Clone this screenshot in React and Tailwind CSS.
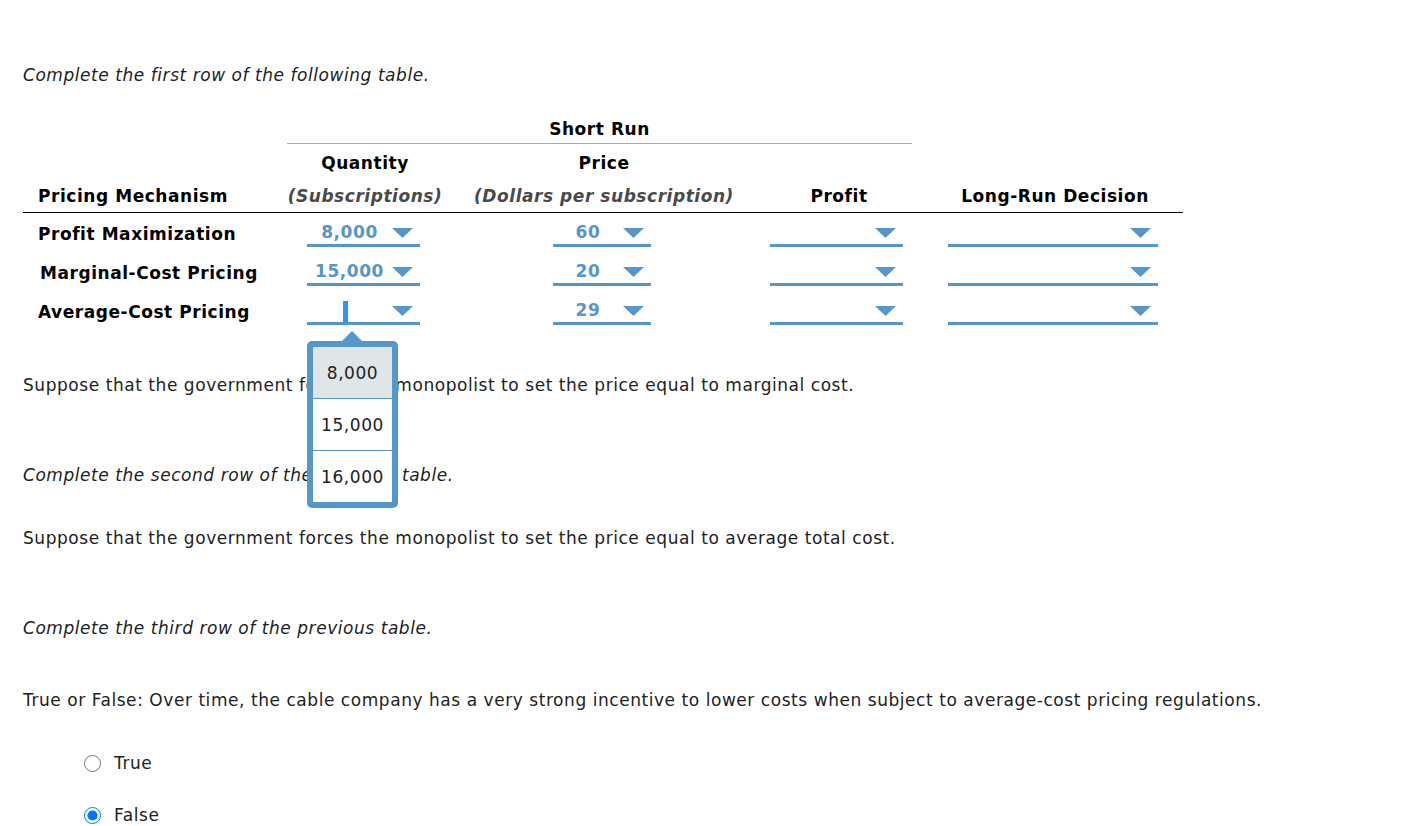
import React from 'react';

const BLUE = 'text-[#5596cb]';

const Arrow = () => (
  <svg width="21" height="10" viewBox="0 0 21 10" className="shrink-0 block">
    <path d="M0 0 H21 L10.5 10 Z" fill="#5596cb" />
  </svg>
);

const Dropdown = ({ value, width, cursor, children }) => (
  <div className={`relative flex items-center h-[28px] border-b-[3px] border-[#5596cb] ${width}`}>
    <div className={`flex-1 text-center font-bold leading-[20px] ${BLUE}`}>
      {cursor ? <span className="inline-block w-[5px] h-[22px] bg-[#3391ff] align-middle translate-x-[-4px] translate-y-[2px]" /> : value}
    </div>
    <div className="mr-[7px] mt-[2px]">
      <Arrow />
    </div>
    {children}
  </div>
);

const Popup = () => (
  <div className="absolute left-0 top-[34px] z-10 w-[91px]">
    <svg width="20" height="10" viewBox="0 0 20 10" className="ml-[35px] block">
      <path d="M0 10 L10 0 L20 10 Z" fill="#5596cb" />
    </svg>
    <div className="rounded-[5px] border-[6px] border-[#5596cb] bg-white font-normal text-[#222]">
      <div className="h-[52px] flex items-center justify-center bg-[#dfe6e9] border-b border-[#5596cb]">8,000</div>
      <div className="h-[52px] flex items-center justify-center border-b border-[#5596cb]">15,000</div>
      <div className="h-[51px] flex items-center justify-center">16,000</div>
    </div>
  </div>
);

const rows = [
  { label: 'Profit Maximization', q: '8,000', p: '60', indent: 'pl-[15px]' },
  { label: 'Marginal-Cost Pricing', q: '15,000', p: '20', indent: 'pl-[17px]' },
  { label: 'Average-Cost Pricing', q: '', p: '29', indent: 'pl-[15px]', open: true },
];

export default function App() {
  return (
    <div
      className="min-h-screen bg-white text-[#222] text-[17px] leading-[20px] tracking-[0.55px]"
      style={{ fontFamily: '"DejaVu Sans", Verdana, sans-serif' }}
    >
      <div className="pl-[23px] pt-[65px]">
        <p className="italic">Complete the first row of the following table.</p>

        {/* Table */}
        <div className="mt-[33px] w-[1160px] font-bold text-black">
          <div className="flex">
            <div className="w-[264px]" />
            <div className="w-[625px] text-center pt-[1px] pb-[4px] border-b border-[#aaa]">Short Run</div>
          </div>
          <div className="flex items-end pt-[9px] pb-[6px] border-b border-black">
            <div className="w-[264px] pl-[15px] whitespace-nowrap">Pricing Mechanism</div>
            <div className="w-[156px] flex flex-col items-center whitespace-nowrap">
              <span>Quantity</span>
              <span className="mt-[13px] italic text-[#4a4a4a]">(Subscriptions)</span>
            </div>
            <div className="w-[322px] flex flex-col items-center whitespace-nowrap">
              <span>Price</span>
              <span className="mt-[13px] italic text-[#4a4a4a]">(Dollars per subscription)</span>
            </div>
            <div className="w-[148px] text-center">Profit</div>
            <div className="w-[270px] pl-[14px] text-center whitespace-nowrap">Long-Run Decision</div>
          </div>

          {rows.map((r) => (
            <div key={r.label} className="flex h-[39px] items-start">
              <div className={`w-[264px] ${r.indent} pt-[11px] whitespace-nowrap`}>{r.label}</div>
              <div className="w-[166px] pt-[6px] pl-[20px]">
                <Dropdown value={r.q} width="w-[113px]" cursor={r.open}>
                  {r.open && <Popup />}
                </Dropdown>
              </div>
              <div className="w-[316px] pt-[6px] pl-[100px]">
                <Dropdown value={r.p} width="w-[98px]" />
              </div>
              <div className="w-[179px] pt-[6px] pl-[1px]">
                <Dropdown value="" width="w-[133px]" />
              </div>
              <div className="pt-[6px]">
                <Dropdown value="" width="w-[210px]" />
              </div>
            </div>
          ))}
        </div>

        <p className="mt-[45px]">Suppose that the government forces the monopolist to set the price equal to marginal cost.</p>
        <p className="mt-[70px] italic">Complete the second row of the previous table.</p>
        <p className="mt-[43px]">Suppose that the government forces the monopolist to set the price equal to average total cost.</p>
        <p className="mt-[70px] italic">Complete the third row of the previous table.</p>
        <p className="mt-[52px]">True or False: Over time, the cable company has a very strong incentive to lower costs when subject to average-cost pricing regulations.</p>

        <div className="mt-[43px] pl-[61px] flex flex-col gap-[32px]">
          <label className="flex items-center gap-[13px] h-[20px]">
            <input type="radio" name="tf" readOnly className="w-[17px] h-[17px] m-0" />
            <span>True</span>
          </label>
          <label className="flex items-center gap-[13px] h-[20px]">
            <input type="radio" name="tf" defaultChecked className="w-[17px] h-[17px] m-0 accent-[#0075ff]" />
            <span>False</span>
          </label>
        </div>
      </div>
    </div>
  );
}
